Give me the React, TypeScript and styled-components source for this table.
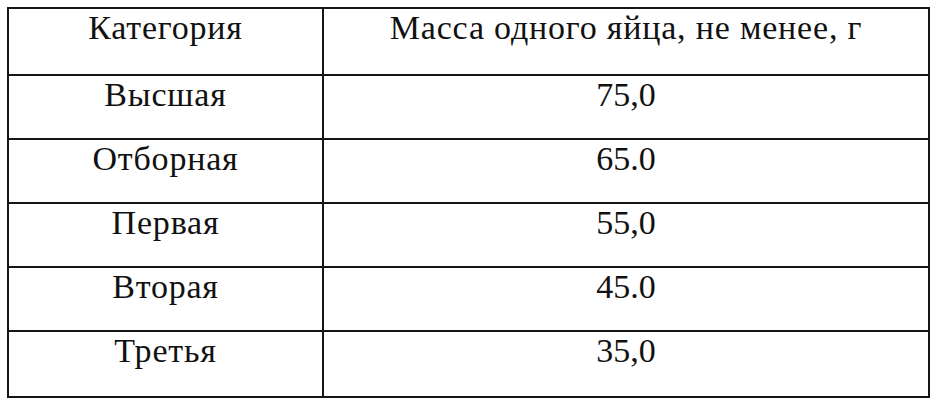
import React from "react";
import styled, { createGlobalStyle } from "styled-components";

const SERIF = `"Liberation Serif", "Times New Roman", "Noto Serif", serif`;

const Global = createGlobalStyle`
  html, body { margin: 0; padding: 0; background: #ffffff; }
  body { font-family: ${SERIF}; color: #111111; }
`;

const Page = styled.div`
  padding: 7px 0 0 7px;
  width: 936px;
  height: 402px;
  box-sizing: border-box;
  background: #ffffff;
`;

const Table = styled.table`
  border-collapse: collapse;
  table-layout: fixed;
  width: 923px;
  font-family: ${SERIF};
`;

const Cell = styled.td<{ $h: number; $num?: boolean }>`
  border: 2px solid #161616;
  height: ${(p) => p.$h}px;
  padding: 0;
  box-sizing: border-box;
  vertical-align: top;
  text-align: center;
  font-size: 34px;
  line-height: 38px;
  letter-spacing: ${(p) => (p.$num ? "0" : "0.8px")};
  font-family: ${SERIF};
  color: #111111;
  white-space: nowrap;
`;

const rows: [string, string][] = [
  ["Высшая", "75,0"],
  ["Отборная", "65.0"],
  ["Первая", "55,0"],
  ["Вторая", "45.0"],
  ["Третья", "35,0"],
];

export default function App() {
  return (
    <Page>
      <Global />
      <Table>
        <colgroup>
          <col style={{ width: 315 }} />
          <col />
        </colgroup>
        <tbody>
          <tr>
            <Cell $h={67}>Категория</Cell>
            <Cell $h={67}>Масса одного яйца, не менее, г</Cell>
          </tr>
          {rows.map(([a, b], i) => {
            const h = i === rows.length - 1 ? 66 : 64;
            return (
              <tr key={a}>
                <Cell $h={h}>{a}</Cell>
                <Cell $h={h} $num>
                  {b}
                </Cell>
              </tr>
            );
          })}
        </tbody>
      </Table>
    </Page>
  );
}
